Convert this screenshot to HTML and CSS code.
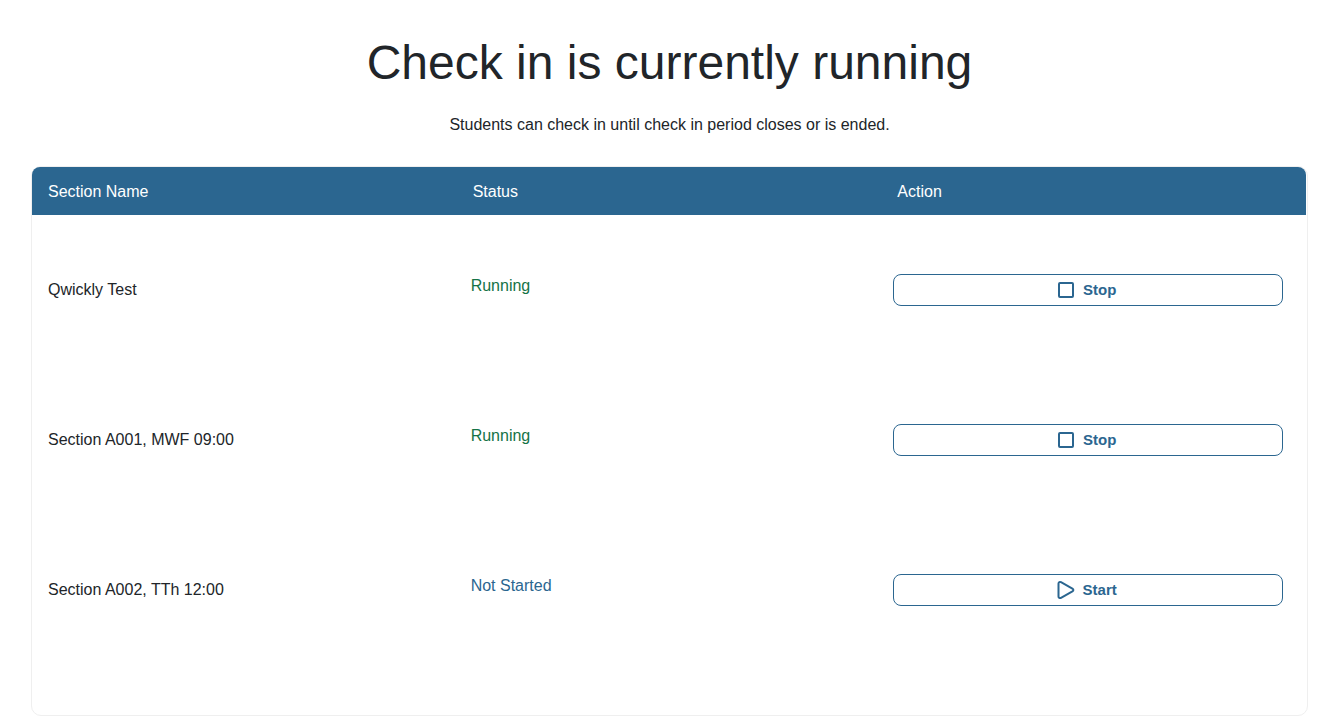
FILE: index.html
```html
<!DOCTYPE html>
<html lang="en">
<head>
<meta charset="utf-8">
<meta name="viewport" content="width=device-width, initial-scale=1">
<title>Check in</title>
<link rel="stylesheet" href="styles.css">
</head>
<body class="page">
<main class="checkin">
  <h1 class="title">Check in is currently running</h1>
  <p class="subtitle">Students can check in until check in period closes or is ended.</p>
  <div class="panel">
    <table class="sections">
      <thead>
        <tr><th scope="col">Section Name</th><th scope="col">Status</th><th scope="col">Action</th></tr>
      </thead>
      <tbody>
        <tr>
          <td class="name">Qwickly Test</td>
          <td class="status running">Running</td>
          <td class="action"><button class="btn" type="button"><svg class="icon" viewBox="0 0 20 20" aria-hidden="true"><rect x="3" y="3" width="14" height="14" rx="1"/></svg>Stop</button></td>
        </tr>
        <tr>
          <td class="name">Section A001, MWF 09:00</td>
          <td class="status running">Running</td>
          <td class="action"><button class="btn" type="button"><svg class="icon" viewBox="0 0 20 20" aria-hidden="true"><rect x="3" y="3" width="14" height="14" rx="1"/></svg>Stop</button></td>
        </tr>
        <tr>
          <td class="name">Section A002, TTh 12:00</td>
          <td class="status idle">Not Started</td>
          <td class="action"><button class="btn" type="button"><svg class="icon" viewBox="0 0 20 20" aria-hidden="true"><path d="M2.500 3.500v13c0 1.400 1.300 2 2.500 1.300l11.400-6.400c1.300-.8 1.300-2 0-2.800L5 2.200C3.800 1.500 2.500 2.100 2.500 3.500z"/></svg>Start</button></td>
        </tr>
      </tbody>
    </table>
  </div>
</main>
</body>
</html>
```
FILE: styles.css
```css
* {
  box-sizing: border-box;
}

.page {
  margin: 0;
  background: #fff;
  color: #212529;
  font: 16px/24px "Liberation Sans", Arial, sans-serif;
}

.checkin {
  padding: 33px 18px 7px 31px;
}

.title {
  margin: 0;
  font-size: 48px;
  font-weight: 400;
  line-height: 60px;
  text-align: center;
}

.subtitle {
  margin: 20px 0 29px;
  text-align: center;
}

.panel {
  padding: 0 1px 50px 0;
  border: 1px solid #efefef;
  border-radius: 10px;
}

.sections {
  width: 100%;
  table-layout: fixed;
  border-collapse: separate;
  border-spacing: 0;
}

.sections th {
  height: 48px;
  padding: 2px 16px 0;
  background: #2b6690;
  color: #fff;
  font-weight: 400;
  text-align: left;
}

.sections th:first-child {
  border-top-left-radius: 8px;
}

.sections th:last-child {
  border-top-right-radius: 8px;
}

.sections td {
  height: 150px;
  padding: 0 16px;
}

.sections .status {
  padding: 0 14px 8px;
}

.running {
  color: #157347;
}

.idle {
  color: #2b6690;
}

.sections .action {
  padding: 0 23px 0 12px;
}

.btn {
  display: flex;
  align-items: center;
  justify-content: center;
  gap: 7px;
  width: 100%;
  height: 32px;
  padding: 0 4px 0 0;
  border: 1px solid #2b6690;
  border-radius: 8px;
  background: #fff;
  color: #2b6690;
  font: bold 15px/20px "Liberation Sans", Arial, sans-serif;
  cursor: pointer;
}

.icon {
  width: 20px;
  height: 20px;
  fill: none;
  stroke: currentColor;
  stroke-width: 2;
  stroke-linejoin: round;
}
```
